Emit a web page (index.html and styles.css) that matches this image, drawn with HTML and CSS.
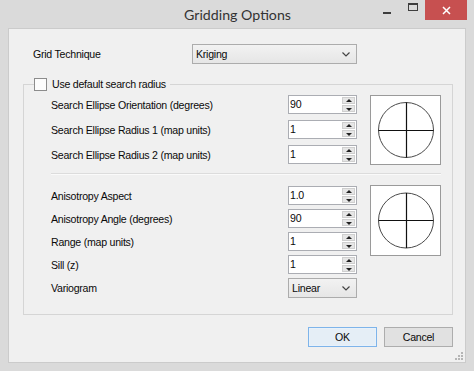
FILE: index.html
```html
<!DOCTYPE html>
<html>
<head>
<meta charset="utf-8">
<link rel="stylesheet" href="styles.css">
</head>
<body>
<div class="window">
  <div class="titlebar">
    <div class="spacer"></div>
    <div class="title">Gridding Options</div>
    <div class="caption">
      <div class="cap-btn cap-min"><span class="min-glyph"></span></div>
      <div class="cap-btn cap-max"><span class="max-glyph"></span></div>
      <div class="cap-btn cap-close">
        <svg width="9" height="9" viewBox="0 0 9 9"><path d="M1 1L8 8M8 1L1 8" stroke="#fff" stroke-width="1.5"/></svg>
      </div>
    </div>
  </div>
  <div class="client">
    <div class="tech-row">
      <span class="tech-label">Grid Technique</span>
      <div class="combo combo-wide">
        <span class="combo-text">Kriging</span>
        <svg class="chev" width="8" height="5" viewBox="0 0 8 5"><path d="M0.5 0.5L4 4L7.5 0.5" fill="none" stroke="#444" stroke-width="1.2"/></svg>
      </div>
    </div>

    <fieldset class="group">
      <legend class="legend"><span class="checkbox"></span><span>Use default search radius</span></legend>

      <div class="section section-1">
        <div class="rows rows-1">
          <div class="row"><span class="label">Search Ellipse Orientation (degrees)</span>
            <div class="spin"><span class="spin-val">90</span><div class="spin-btns"><span class="spin-up"></span><span class="spin-down"></span></div></div></div>
          <div class="row"><span class="label">Search Ellipse Radius 1 (map units)</span>
            <div class="spin"><span class="spin-val">1</span><div class="spin-btns"><span class="spin-up"></span><span class="spin-down"></span></div></div></div>
          <div class="row"><span class="label">Search Ellipse Radius 2 (map units)</span>
            <div class="spin"><span class="spin-val">1</span><div class="spin-btns"><span class="spin-up"></span><span class="spin-down"></span></div></div></div>
        </div>
        <div class="pic pic-1">
          <svg width="69" height="68" viewBox="0 0 69 68">
            <circle cx="35" cy="34" r="27.5" fill="none" stroke="#4a4a4a" stroke-width="1"/>
            <path d="M7.5 34.5H62.5M35.5 6.5V61.5" stroke="#111" stroke-width="1.2"/>
          </svg>
        </div>
      </div>

      <div class="sep"></div>

      <div class="section section-2">
        <div class="rows rows-2">
          <div class="row"><span class="label">Anisotropy Aspect</span>
            <div class="spin"><span class="spin-val">1.0</span><div class="spin-btns"><span class="spin-up"></span><span class="spin-down"></span></div></div></div>
          <div class="row"><span class="label">Anisotropy Angle (degrees)</span>
            <div class="spin"><span class="spin-val">90</span><div class="spin-btns"><span class="spin-up"></span><span class="spin-down"></span></div></div></div>
          <div class="row"><span class="label">Range (map units)</span>
            <div class="spin"><span class="spin-val">1</span><div class="spin-btns"><span class="spin-up"></span><span class="spin-down"></span></div></div></div>
          <div class="row"><span class="label">Sill (z)</span>
            <div class="spin"><span class="spin-val">1</span><div class="spin-btns"><span class="spin-up"></span><span class="spin-down"></span></div></div></div>
          <div class="row row-combo"><span class="label">Variogram</span>
            <div class="combo combo-small">
              <span class="combo-text">Linear</span>
              <svg class="chev" width="8" height="5" viewBox="0 0 8 5"><path d="M0.5 0.5L4 4L7.5 0.5" fill="none" stroke="#444" stroke-width="1.2"/></svg>
            </div></div>
        </div>
        <div class="pic pic-2">
          <svg width="69" height="69" viewBox="0 0 69 69">
            <circle cx="35" cy="34.5" r="27.5" fill="none" stroke="#4a4a4a" stroke-width="1"/>
            <path d="M7.5 34.5H62.5M35.5 7V62" stroke="#111" stroke-width="1.2"/>
          </svg>
        </div>
      </div>
    </fieldset>

    <div class="buttons">
      <div class="btn btn-default">OK</div>
      <div class="btn">Cancel</div>
    </div>
    <svg class="grip" width="10" height="10" viewBox="0 0 10 10">
      <rect x="7" y="1" width="2" height="2" fill="#b5b5b5"/>
      <rect x="4" y="4" width="2" height="2" fill="#b5b5b5"/>
      <rect x="7" y="4" width="2" height="2" fill="#b5b5b5"/>
      <rect x="1" y="7" width="2" height="2" fill="#b5b5b5"/>
      <rect x="4" y="7" width="2" height="2" fill="#b5b5b5"/>
      <rect x="7" y="7" width="2" height="2" fill="#b5b5b5"/>
    </svg>
  </div>
</div>
</body>
</html>
```

FILE: styles.css
```css
* { box-sizing: border-box; }
html, body { margin: 0; padding: 0; }
body {
  width: 474px;
  height: 371px;
  overflow: hidden;
  font-family: "Liberation Sans", Arial, sans-serif;
  font-size: 10.6px;
  letter-spacing: -0.25px;
  color: #0a0a0a;
}
.window {
  width: 474px;
  height: 371px;
  background: #dadada;
  display: flex;
  flex-direction: column;
}
.titlebar {
  height: 28px;
  display: grid;
  grid-template-columns: 1fr auto 1fr;
  align-items: start;
}
.title {
  font-family: Lato, "Open Sans", sans-serif;
  font-size: 14.2px;
  letter-spacing: 0;
  color: #333;
  line-height: 30px;
  padding-left: 1px;
}
.caption {
  display: flex;
  justify-content: flex-end;
  padding-right: 7px;
}
.cap-btn {
  height: 20px;
  display: flex;
  align-items: center;
  justify-content: center;
}
.cap-min { width: 26px; }
.cap-max { width: 25px; }
.cap-close { width: 42px; background: #c75050; }
.min-glyph {
  width: 8px;
  height: 2px;
  background: #3d3d3d;
  margin-top: 5px;
}
.max-glyph {
  width: 10px;
  height: 8px;
  border: 1px solid #3d3d3d;
  border-top-width: 2px;
  margin-top: -6px;
}
.client {
  flex: 1;
  margin: 0 8px 8px 8px;
  background: #f0f0f0;
  border: 1px solid #cbcbcb;
  position: relative;
  display: flex;
  flex-direction: column;
}
.tech-row {
  display: flex;
  align-items: center;
  margin-top: 15px;
  padding-left: 24px;
}
.tech-label { width: 159px; }
.combo {
  height: 20px;
  border: 1px solid #acacac;
  background: linear-gradient(#f2f2f2, #e6e6e6);
  display: flex;
  align-items: center;
  justify-content: space-between;
  padding: 0 6px 0 3px;
}
.combo-wide { width: 165px; }
.combo-small { width: 69px; }
.combo-text { color: #0a0a0a; }
.chev { display: block; }

.group {
  margin: 13px 12px 0 14px;
  border: 1px solid #d5d5d5;
  padding: 4px 11px 16px 27px;
  min-width: 0;
}
.legend {
  margin-left: -17px;
  padding: 0 4px 0 0;
  display: flex;
  align-items: center;
  height: 14px;
}
.checkbox {
  width: 13px;
  height: 13px;
  border: 1px solid #8c8c8c;
  background: #fcfcfc;
  margin-right: 5px;
}
.section {
  display: flex;
  align-items: flex-start;
  gap: 13px;
}
.rows {
  flex: 1;
  display: flex;
  flex-direction: column;
}
.rows-1 { gap: 6px; }
.rows-2 { gap: 4px; padding-top: 1px; }
.row {
  display: flex;
  align-items: center;
  justify-content: space-between;
  height: 19px;
}
.row-combo { height: 20px; }
.spin {
  width: 69px;
  height: 19px;
  border: 1px solid #abadb3;
  background: #fff;
  display: flex;
}
.spin-val {
  flex: 1;
  padding-left: 1px;
  line-height: 16px;
  color: #0a0a0a;
}
.spin-btns {
  width: 15px;
  display: flex;
  flex-direction: column;
  padding: 1px;
  gap: 1px;
  background: #fff;
}
.spin-up, .spin-down {
  flex: 1;
  background: #e6e6e6;
  border: 1px solid #cfcfcf;
  position: relative;
}
.spin-up::after, .spin-down::after {
  content: "";
  position: absolute;
  left: 50%;
  top: 50%;
  margin-left: -3px;
  border-left: 3px solid transparent;
  border-right: 3px solid transparent;
}
.spin-up::after { border-bottom: 3px solid #222; margin-top: -2px; }
.spin-down::after { border-top: 3px solid #222; margin-top: -1px; }

.pic {
  width: 71px;
  background: #fff;
  border: 1px solid #9a9a9a;
}
.pic svg { display: block; }
.pic-1 { height: 70px; }
.pic-2 { height: 71px; }
.sep {
  height: 2px;
  border-top: 1px solid #dcdcdc;
  border-bottom: 1px solid #fafafa;
  margin: 8px 0 10px 0;
}
.buttons {
  display: flex;
  justify-content: flex-end;
  gap: 7px;
  margin: 12px 12px 0 0;
}
.btn {
  width: 69px;
  height: 20px;
  border: 1px solid #adadad;
  background: #e1e1e1;
  display: flex;
  align-items: center;
  justify-content: center;
  color: #0a0a0a;
}
.btn-default {
  border-color: #7eb4ea;
  background: #e5eef6;
  box-shadow: inset 0 0 0 1px #e8f1fa;
}
.grip {
  position: absolute;
  right: 1px;
  bottom: 1px;
}
```
